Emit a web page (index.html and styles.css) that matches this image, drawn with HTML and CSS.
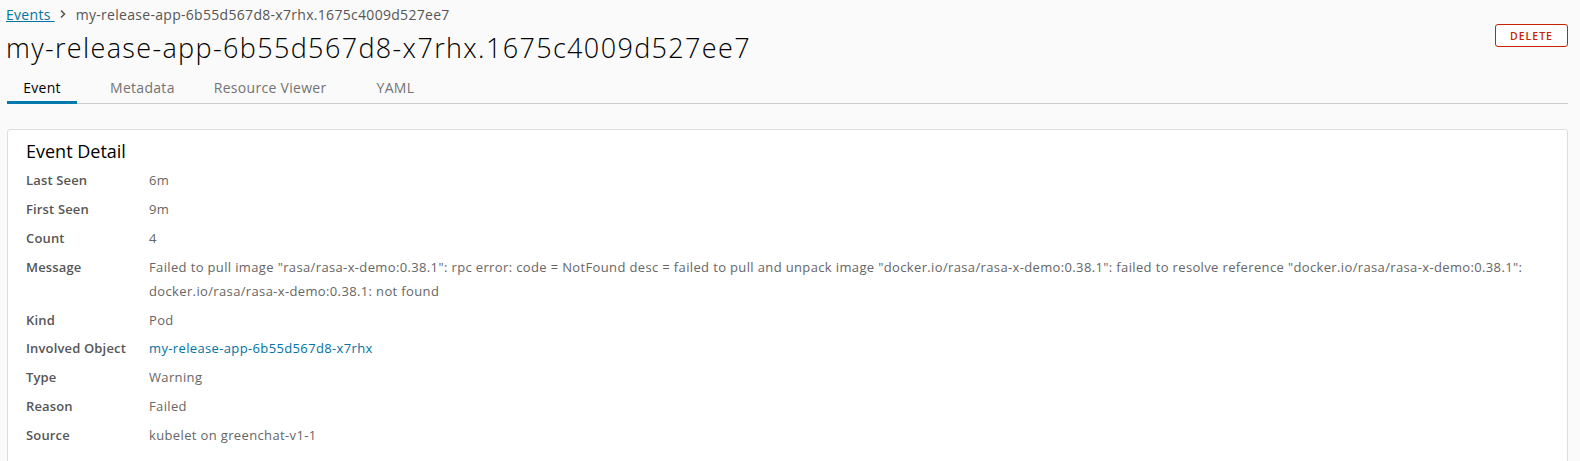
FILE: index.html
```html
<!DOCTYPE html>
<html>
<head>
<meta charset="utf-8">
<link rel="stylesheet" href="styles.css">
</head>
<body>
<div class="page">
  <div class="crumbs">
    <a class="crumb-link" href="#">Events </a>
    <svg class="chev" width="8" height="10" viewBox="0 0 8 10"><path d="M2 1.5 L5.5 5 L2 8.5" fill="none" stroke="#565656" stroke-width="1.6"/></svg>
    <span class="crumb-current">my-release-app-6b55d567d8-x7rhx.1675c4009d527ee7</span>
  </div>
  <div class="head">
    <h1 class="title">my-release-app-6b55d567d8-x7rhx.1675c4009d527ee7</h1>
    <button class="btn-delete">DELETE</button>
  </div>
  <div class="tabs">
    <div class="tab active">Event</div>
    <div class="tab">Metadata</div>
    <div class="tab">Resource Viewer</div>
    <div class="tab">YAML</div>
  </div>
  <div class="card">
    <h2 class="card-title">Event Detail</h2>
    <div class="rows">
      <div class="row"><div class="lbl">Last Seen</div><div class="val">6m</div></div>
      <div class="row"><div class="lbl">First Seen</div><div class="val">9m</div></div>
      <div class="row"><div class="lbl">Count</div><div class="val">4</div></div>
      <div class="row"><div class="lbl">Message</div><div class="val msg">Failed to pull image "rasa/rasa-x-demo:0.38.1": rpc error: code = NotFound desc = failed to pull and unpack image "docker.io/rasa/rasa-x-demo:0.38.1": failed to resolve reference "docker.io/rasa/rasa-x-demo:0.38.1": docker.io/rasa/rasa-x-demo:0.38.1: not found</div></div>
      <div class="row"><div class="lbl">Kind</div><div class="val">Pod</div></div>
      <div class="row"><div class="lbl">Involved Object</div><div class="val"><a class="link" href="#">my-release-app-6b55d567d8-x7rhx</a></div></div>
      <div class="row"><div class="lbl">Type</div><div class="val">Warning</div></div>
      <div class="row"><div class="lbl">Reason</div><div class="val">Failed</div></div>
      <div class="row"><div class="lbl">Source</div><div class="val">kubelet on greenchat-v1-1</div></div>
    </div>
  </div>
</div>
</body>
</html>
```

FILE: styles.css
```css
html, body {
  margin: 0;
  padding: 0;
  background: #fafafa;
  font-family: "Open Sans", Lato, sans-serif;
  color: #565656;
}
.page {
  padding: 4px 12px 0 7px;
}
.crumbs {
  display: flex;
  align-items: center;
  font-size: 14px;
  letter-spacing: 0.3px;
  height: 20px;
  margin-left: -1px;
}
.crumb-link {
  color: #0072a3;
  text-decoration: underline;
  white-space: pre;
}
.chev {
  margin: 0 9px 0 4px;
}
.crumb-current {
  color: #565656;
}
.head {
  display: flex;
  justify-content: space-between;
  align-items: flex-start;
}
.title {
  margin: 6px 0 0 -1px;
  font-size: 27px;
  font-weight: 300;
  letter-spacing: 1.35px;
  color: #000;
  line-height: 36px;
}
.btn-delete {
  margin-top: 0;
  width: 73px;
  height: 23px;
  border: 1px solid #c92100;
  border-radius: 3px;
  background: #fff;
  color: #c92100;
  font-family: "Open Sans", sans-serif;
  font-size: 10.5px;
  font-weight: 600;
  letter-spacing: 1px;
  padding: 0;
}
.tabs {
  display: flex;
  margin-top: 7px;
  border-bottom: 1px solid #cccccc;
  height: 31px;
  box-sizing: border-box;
}
.tab {
  font-size: 14px;
  letter-spacing: 0.3px;
  color: #737373;
  padding: 5px 16px 0 16px;
  line-height: 20px;
  box-sizing: border-box;
  height: 30px;
  white-space: nowrap;
}
.tab.active {
  color: #000;
  border-bottom: 3px solid #0079ad;
  height: 31px;
  padding: 5px 0 0 0;
  width: 70px;
  text-align: center;
}
.tab:nth-child(2) { margin-left: 17px; }
.tab:nth-child(3) { margin-left: 7px; }
.tab:nth-child(4) { margin-left: 18px; }
.card {
  margin-top: 25px;
  background: #fff;
  border: 1px solid #dddddd;
  border-radius: 3px;
  padding: 9px 18px 10px 18px;
  min-height: 400px;
}
.card-title {
  margin: 0 0 3px 0;
  font-size: 18px;
  font-weight: 400;
  color: #000;
  line-height: 24px;
}
.row {
  display: flex;
  font-size: 13px;
  line-height: 24px;
  padding: 2.4px 0;
}
.lbl {
  width: 123px;
  flex: none;
  font-weight: 600;
  letter-spacing: 0.15px;
  color: #565656;
}
.val {
  color: #666;
  flex: 1;
  letter-spacing: 0.36px;
}
.link {
  color: #0072a3;
  text-decoration: none;
}
```
